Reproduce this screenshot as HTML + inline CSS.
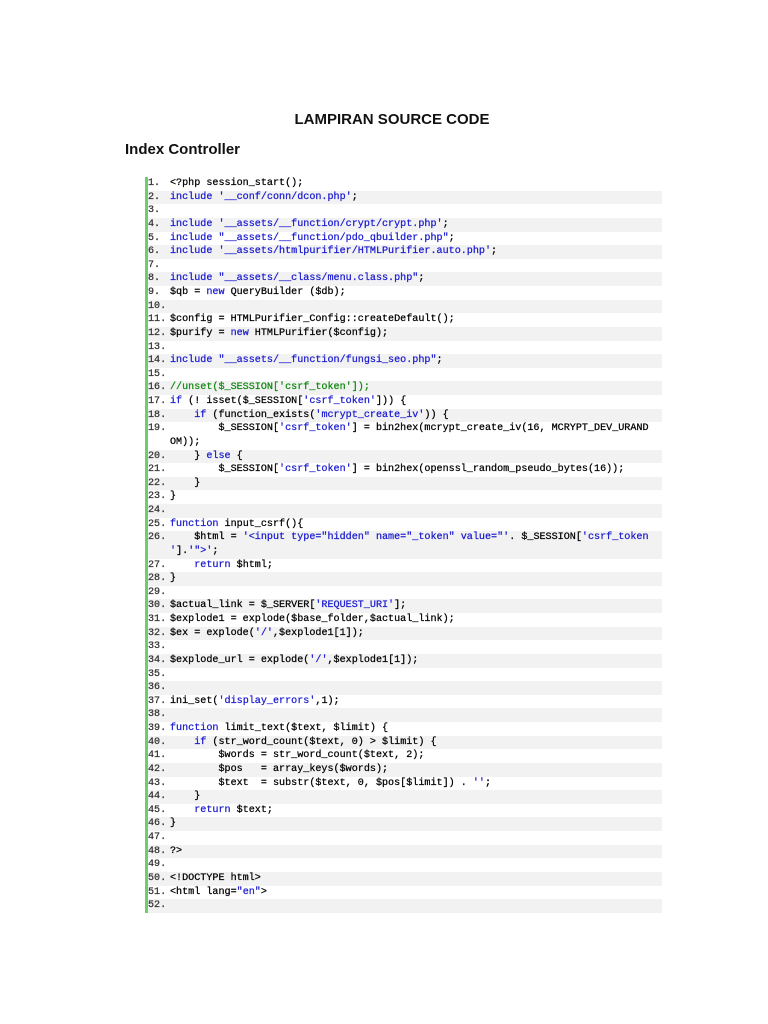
<!DOCTYPE html>
<html><head><meta charset="utf-8"><style>
body{margin:0;width:768px;height:1024px;background:#fff;position:relative;font-family:"Liberation Sans",sans-serif;}
h1{position:absolute;top:111px;left:0;width:784px;text-align:center;margin:0;font-size:15px;font-weight:bold;color:#111;}
h2{position:absolute;top:141px;left:125px;margin:0;font-size:15px;font-weight:bold;color:#111;}
#code{position:absolute;left:145px;top:177px;width:514px;border-left:3px solid #6ad16a;}
.r{height:13.64px;line-height:13.64px;font-family:"Liberation Mono",monospace;font-size:10.1px;color:#000;white-space:pre;position:relative;-webkit-text-stroke:0.25px currentColor}
.s{background:#f2f2f2}
.n{display:inline-block;width:22px;color:#333}
.k{color:#1a1ad0}.c{color:#118811}
</style></head><body>
<h1>LAMPIRAN SOURCE CODE</h1>
<h2>Index Controller</h2>
<div id="code">
<div class="r"><span class="n">1.</span>&lt;?php session_start();</div>
<div class="r s"><span class="n">2.</span><span class="k">include '__conf/conn/dcon.php'</span>;</div>
<div class="r"><span class="n">3.</span></div>
<div class="r s"><span class="n">4.</span><span class="k">include '__assets/__function/crypt/crypt.php'</span>;</div>
<div class="r"><span class="n">5.</span><span class="k">include "__assets/__function/pdo_qbuilder.php"</span>;</div>
<div class="r s"><span class="n">6.</span><span class="k">include '__assets/htmlpurifier/HTMLPurifier.auto.php'</span>;</div>
<div class="r"><span class="n">7.</span></div>
<div class="r s"><span class="n">8.</span><span class="k">include "__assets/__class/menu.class.php"</span>;</div>
<div class="r"><span class="n">9.</span>$qb = <span class="k">new</span> QueryBuilder ($db);</div>
<div class="r s"><span class="n">10.</span></div>
<div class="r"><span class="n">11.</span>$config = HTMLPurifier_Config::createDefault();</div>
<div class="r s"><span class="n">12.</span>$purify = <span class="k">new</span> HTMLPurifier($config);</div>
<div class="r"><span class="n">13.</span></div>
<div class="r s"><span class="n">14.</span><span class="k">include "__assets/__function/fungsi_seo.php"</span>;</div>
<div class="r"><span class="n">15.</span></div>
<div class="r s"><span class="n">16.</span><span class="c">//unset($_SESSION['csrf_token']);</span></div>
<div class="r"><span class="n">17.</span><span class="k">if</span> (! isset($_SESSION[<span class="k">'csrf_token'</span>])) {</div>
<div class="r s"><span class="n">18.</span>    <span class="k">if</span> (function_exists(<span class="k">'mcrypt_create_iv'</span>)) {</div>
<div class="r"><span class="n">19.</span>        $_SESSION[<span class="k">'csrf_token'</span>] = bin2hex(mcrypt_create_iv(16, MCRYPT_DEV_URAND</div>
<div class="r"><span class="n"></span>OM));</div>
<div class="r s"><span class="n">20.</span>    } <span class="k">else</span> {</div>
<div class="r"><span class="n">21.</span>        $_SESSION[<span class="k">'csrf_token'</span>] = bin2hex(openssl_random_pseudo_bytes(16));</div>
<div class="r s"><span class="n">22.</span>    }</div>
<div class="r"><span class="n">23.</span>}</div>
<div class="r s"><span class="n">24.</span></div>
<div class="r"><span class="n">25.</span><span class="k">function</span> input_csrf(){</div>
<div class="r s"><span class="n">26.</span>    $html = <span class="k">'&lt;input type="hidden" name="_token" value="'</span>. $_SESSION[<span class="k">'csrf_token</span></div>
<div class="r s"><span class="n"></span><span class="k">'</span>].<span class="k">'"&gt;'</span>;</div>
<div class="r"><span class="n">27.</span>    <span class="k">return</span> $html;</div>
<div class="r s"><span class="n">28.</span>}</div>
<div class="r"><span class="n">29.</span></div>
<div class="r s"><span class="n">30.</span>$actual_link = $_SERVER[<span class="k">'REQUEST_URI'</span>];</div>
<div class="r"><span class="n">31.</span>$explode1 = explode($base_folder,$actual_link);</div>
<div class="r s"><span class="n">32.</span>$ex = explode(<span class="k">'/'</span>,$explode1[1]);</div>
<div class="r"><span class="n">33.</span></div>
<div class="r s"><span class="n">34.</span>$explode_url = explode(<span class="k">'/'</span>,$explode1[1]);</div>
<div class="r"><span class="n">35.</span></div>
<div class="r s"><span class="n">36.</span></div>
<div class="r"><span class="n">37.</span>ini_set(<span class="k">'display_errors'</span>,1);</div>
<div class="r s"><span class="n">38.</span></div>
<div class="r"><span class="n">39.</span><span class="k">function</span> limit_text($text, $limit) {</div>
<div class="r s"><span class="n">40.</span>    <span class="k">if</span> (str_word_count($text, 0) &gt; $limit) {</div>
<div class="r"><span class="n">41.</span>        $words = str_word_count($text, 2);</div>
<div class="r s"><span class="n">42.</span>        $pos   = array_keys($words);</div>
<div class="r"><span class="n">43.</span>        $text  = substr($text, 0, $pos[$limit]) . <span class="k">''</span>;</div>
<div class="r s"><span class="n">44.</span>    }</div>
<div class="r"><span class="n">45.</span>    <span class="k">return</span> $text;</div>
<div class="r s"><span class="n">46.</span>}</div>
<div class="r"><span class="n">47.</span></div>
<div class="r s"><span class="n">48.</span>?&gt;</div>
<div class="r"><span class="n">49.</span></div>
<div class="r s"><span class="n">50.</span>&lt;!DOCTYPE html&gt;</div>
<div class="r"><span class="n">51.</span>&lt;html lang=<span class="k">"en"</span>&gt;</div>
<div class="r s"><span class="n">52.</span></div>
</div>
</body></html>
